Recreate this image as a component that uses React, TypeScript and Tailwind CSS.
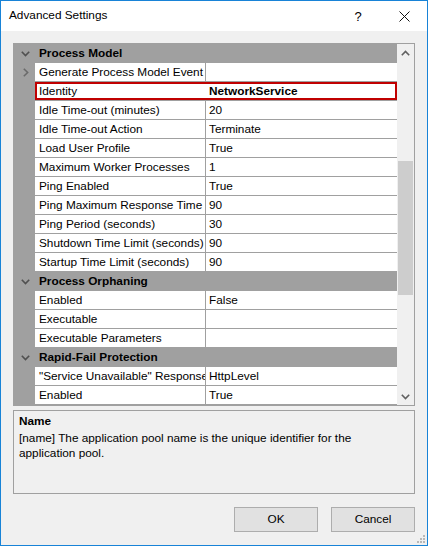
import React from "react";

type Row =
  | { kind: "cat"; label: string }
  | { kind: "item"; name: string; value: string; selected?: boolean; expander?: boolean };

const rows: Row[] = [
  { kind: "cat", label: "Process Model" },
  { kind: "item", name: "Generate Process Model Event Log", value: "", expander: true },
  { kind: "item", name: "Identity", value: "NetworkService", selected: true },
  { kind: "item", name: "Idle Time-out (minutes)", value: "20" },
  { kind: "item", name: "Idle Time-out Action", value: "Terminate" },
  { kind: "item", name: "Load User Profile", value: "True" },
  { kind: "item", name: "Maximum Worker Processes", value: "1" },
  { kind: "item", name: "Ping Enabled", value: "True" },
  { kind: "item", name: "Ping Maximum Response Time (seconds)", value: "90" },
  { kind: "item", name: "Ping Period (seconds)", value: "30" },
  { kind: "item", name: "Shutdown Time Limit (seconds)", value: "90" },
  { kind: "item", name: "Startup Time Limit (seconds)", value: "90" },
  { kind: "cat", label: "Process Orphaning" },
  { kind: "item", name: "Enabled", value: "False" },
  { kind: "item", name: "Executable", value: "" },
  { kind: "item", name: "Executable Parameters", value: "" },
  { kind: "cat", label: "Rapid-Fail Protection" },
  { kind: "item", name: "\"Service Unavailable\" Response Type", value: "HttpLevel" },
  { kind: "item", name: "Enabled", value: "True" },
];

function ChevronDown({ color = "#505050" }: { color?: string }) {
  return (
    <svg width="9" height="6" viewBox="0 0 9 6">
      <polyline points="0.8,0.8 4.5,4.6 8.2,0.8" fill="none" stroke={color} strokeWidth="1.6" />
    </svg>
  );
}

function ChevronUp({ color = "#606060" }: { color?: string }) {
  return (
    <svg width="9" height="6" viewBox="0 0 9 6">
      <polyline points="0.8,5.2 4.5,1.4 8.2,5.2" fill="none" stroke={color} strokeWidth="1.6" />
    </svg>
  );
}

function ChevronRight() {
  return (
    <svg width="6" height="9" viewBox="0 0 6 9">
      <polyline points="0.8,0.8 4.6,4.5 0.8,8.2" fill="none" stroke="#6a6a6a" strokeWidth="1.6" />
    </svg>
  );
}

function GridRow({ row }: { row: Row }) {
  if (row.kind === "cat") {
    return (
      <div className="flex h-[19px] bg-[#a0a0a0]">
        <div className="w-[21px] flex items-center justify-center pl-[1px]">
          <ChevronDown />
        </div>
        <div className="flex-1 pl-[4px] leading-[19px] font-bold text-black whitespace-nowrap">{row.label}</div>
      </div>
    );
  }
  return (
    <div className="flex h-[19px]">
      <div className="w-[21px] flex items-center justify-center pl-[2px]">
        {row.expander ? <ChevronRight /> : null}
      </div>
      <div className="flex-1 border-b border-[#a0a0a0] bg-white">
        {row.selected ? (
          <div className="flex h-[18px] border-2 border-[#c00000]">
            <div className="w-[168px] pl-[2px] leading-[14px] whitespace-nowrap overflow-hidden text-black">{row.name}</div>
            <div className="flex-1 pl-[4px] leading-[14px] font-bold whitespace-nowrap overflow-hidden text-black">{row.value}</div>
          </div>
        ) : (
          <div className="flex h-[18px]">
            <div className="w-[171px] border-r border-[#a0a0a0] pl-[4px] leading-[18px] whitespace-nowrap overflow-hidden text-black">{row.name}</div>
            <div className="flex-1 pl-[3px] leading-[18px] whitespace-nowrap overflow-hidden text-black">{row.value}</div>
          </div>
        )}
      </div>
    </div>
  );
}

export default function App() {
  return (
    <div
      className="relative w-[428px] h-[546px] border border-[#1883d7] bg-[#f0f0f0] flex flex-col text-[11.8px] text-black"
      style={{ fontFamily: '"Segoe UI", "Liberation Sans", Arial, sans-serif' }}
    >
      {/* Title bar */}
      <div className="h-[30px] bg-white flex items-center">
        <div className="pl-[8px] text-[11.8px]">Advanced Settings</div>
        <div className="ml-auto flex h-full">
          <div className="w-[46px] h-full flex items-center justify-center text-[13px] pt-[1px]">?</div>
          <div className="w-[46px] h-full flex items-center justify-center">
            <svg width="11" height="11" viewBox="0 0 11 11">
              <line x1="0.5" y1="0.5" x2="10.5" y2="10.5" stroke="#111" strokeWidth="1" />
              <line x1="10.5" y1="0.5" x2="0.5" y2="10.5" stroke="#111" strokeWidth="1" />
            </svg>
          </div>
        </div>
      </div>

      {/* Property grid */}
      <div className="mx-[12px] mt-[12px] h-[363px] border border-[#a0a0a0] flex">
        <div className="w-[383px] bg-[#a0a0a0] flex flex-col overflow-hidden">
          {rows.map((r, i) => (
            <GridRow key={i} row={r} />
          ))}
        </div>
        <div className="w-[17px] bg-[#f0f0f0] flex flex-col">
          <div className="h-[17px] flex items-center justify-center">
            <ChevronUp />
          </div>
          <div className="h-[100px]" />
          <div className="h-[134px] mx-[1px] bg-[#cdcdcd]" />
          <div className="flex-1" />
          <div className="h-[17px] flex items-center justify-center">
            <ChevronDown color="#606060" />
          </div>
        </div>
      </div>

      {/* Description */}
      <div className="mx-[12px] mt-[4px] h-[84px] border border-[#a0a0a0] px-[5px] pt-[3px]">
        <div className="font-bold leading-[15px]">Name</div>
        <div className="mt-[2px] leading-[15px]">
          [name] The application pool name is the unique identifier for the
          <br />
          application pool.
        </div>
      </div>

      {/* Buttons */}
      <div className="mt-[13px] mr-[12px] flex justify-end gap-[13px]">
        <div className="w-[84px] h-[25px] border border-[#adadad] bg-[#e1e1e1] flex items-center justify-center">OK</div>
        <div className="w-[84px] h-[25px] border border-[#adadad] bg-[#e1e1e1] flex items-center justify-center">Cancel</div>
      </div>

      {/* Size grip */}
      <svg className="absolute right-[1px] bottom-[1px]" width="10" height="10" viewBox="0 0 10 10">
        <rect x="7" y="1" width="2" height="2" fill="#b8b8b8" />
        <rect x="4" y="4" width="2" height="2" fill="#b8b8b8" />
        <rect x="7" y="4" width="2" height="2" fill="#b8b8b8" />
        <rect x="1" y="7" width="2" height="2" fill="#b8b8b8" />
        <rect x="4" y="7" width="2" height="2" fill="#b8b8b8" />
        <rect x="7" y="7" width="2" height="2" fill="#b8b8b8" />
      </svg>
    </div>
  );
}
